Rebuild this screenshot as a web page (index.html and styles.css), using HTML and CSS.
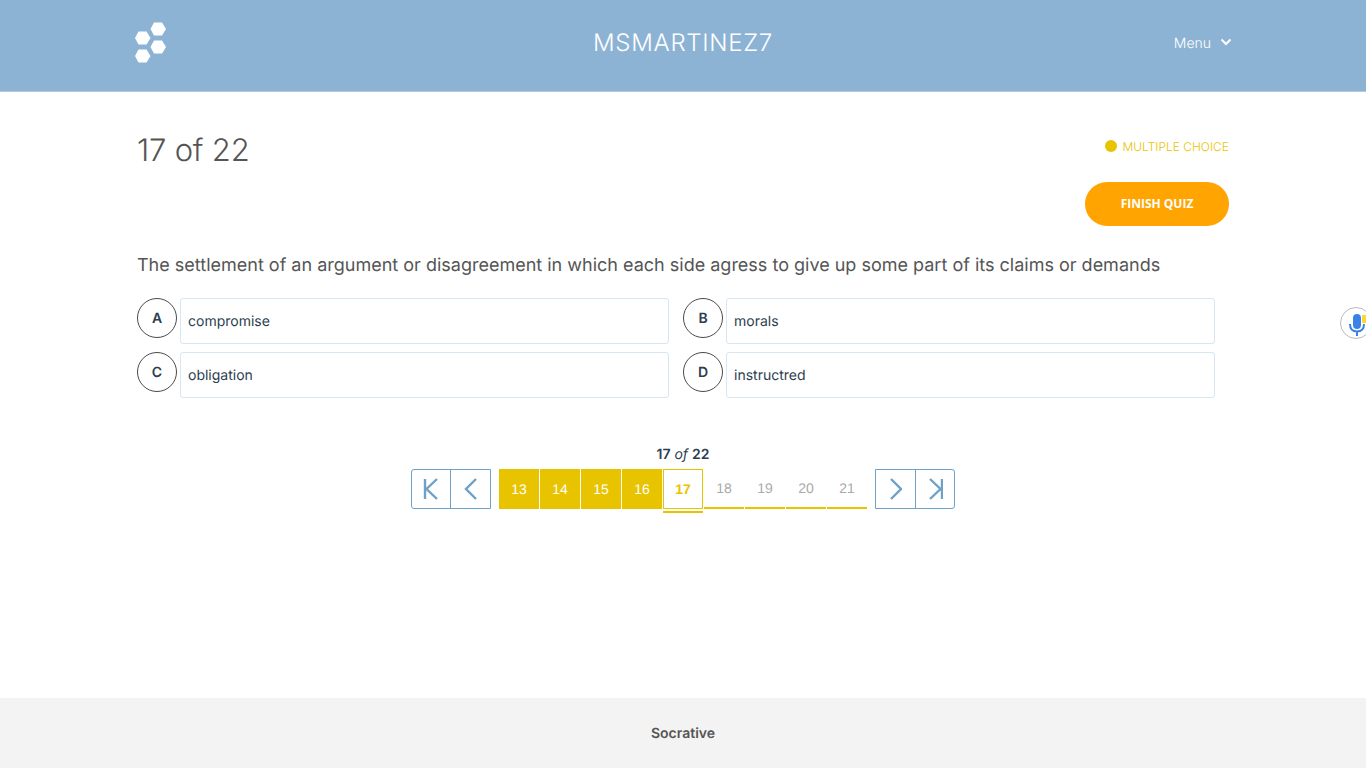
FILE: index.html
```html
<!DOCTYPE html>
<html lang="en">
  <head>
    <meta charset="UTF-8" />
    <meta name="viewport" content="width=device-width, initial-scale=1.0" />
    <title>Socrative</title>
    <link rel="stylesheet" href="styles.css">
  </head>
  <body>
    <header class="top-bar">
      <div class="top-inner">
        <svg class="logo" width="32" height="42" viewBox="0 0 32 42">
          <polygon points="15.500,7 19,0.500 27,0.500 31,7 27,13.500 19,13.500" />
          <polygon points="0,16 3.500,9.500 11.500,9.500 15.500,16 11.500,22.500 3.500,22.500" />
          <polygon points="15.500,25 19,18.500 27,18.500 31,25 27,31.500 19,31.500" />
          <polygon points="0,34 3.500,27.500 11.500,27.500 15.500,34 11.500,40.500 3.500,40.500" />
        </svg>
        <div class="room-name">MSMARTINEZ7</div>
        <div class="menu">
          Menu
          <svg width="12" height="8" viewBox="0 0 12 8"><polyline points="1.500,1.500 6,6 10.500,1.500" /></svg>
        </div>
      </div>
    </header>

    <main class="contents">
      <div class="quiz-head">
        <h1 class="quiz-count">17 of 22</h1>
        <div class="quiz-side">
          <div class="quiz-type"><span class="dot"></span>MULTIPLE CHOICE</div>
          <button class="finish-btn">FINISH QUIZ</button>
        </div>
      </div>

      <p class="question">The settlement of an argument or disagreement in which each side agress to give up some part of its claims or demands</p>

      <div class="answers">
        <div class="answer"><span class="letter">A</span><div class="answer-text">compromise</div></div>
        <div class="answer"><span class="letter">B</span><div class="answer-text">morals</div></div>
        <div class="answer"><span class="letter">C</span><div class="answer-text">obligation</div></div>
        <div class="answer"><span class="letter">D</span><div class="answer-text">instructred</div></div>
      </div>

      <div class="pager">
        <div class="pager-label"><b>17</b> <i>of</i> <b>22</b></div>
        <div class="pager-row">
          <div class="arrows arrows-back">
            <button class="arrow">
              <svg width="16" height="22" viewBox="0 0 16 22"><path d="M2 1v20M14 1 3.500 11 14 21" /></svg>
            </button>
            <button class="arrow">
              <svg width="14" height="22" viewBox="0 0 14 22"><path d="M12 1 2 11l10 10" /></svg>
            </button>
          </div>
          <div class="pages">
            <span class="page done">13</span>
            <span class="page done">14</span>
            <span class="page done">15</span>
            <span class="page done">16</span>
            <span class="page current">17</span>
            <span class="page todo">18</span>
            <span class="page todo">19</span>
            <span class="page todo">20</span>
            <span class="page todo">21</span>
          </div>
          <div class="arrows arrows-next">
            <button class="arrow">
              <svg width="14" height="22" viewBox="0 0 14 22"><path d="M3 1l10 10L3 21" /></svg>
            </button>
            <button class="arrow">
              <svg width="16" height="22" viewBox="0 0 16 22"><path d="M15 1v20M3 1l10.500 10L3 21" /></svg>
            </button>
          </div>
        </div>
      </div>
    </main>

    <footer class="footer">Socrative</footer>

    <div class="mic-badge">
      <svg width="32" height="32" viewBox="0 0 32 32">
        <rect x="22" y="8" width="8" height="8" fill="#fdd835" />
        <rect x="13" y="7" width="8" height="15" rx="4" fill="#3b82e8" />
        <path d="M10 17c0 5 3 7.500 7 7.500s7-2.500 7-7.500M17 24v5" fill="none" stroke="#3b82e8" stroke-width="2" />
      </svg>
    </div>
  </body>
</html>
```

FILE: styles.css
```css
* {
  box-sizing: border-box;
}

body {
  margin: 0;
  min-height: 100vh;
  display: flex;
  flex-direction: column;
  font-family: "Inter", "Liberation Sans", sans-serif;
  text-rendering: geometricPrecision;
  color: #555;
  background: #fff;
  overflow-x: hidden;
}

.top-bar {
  height: 92px;
  background: #8db3d4;
  border-bottom: 1px solid #b4c9dc;
  color: #fff;
}

.top-inner {
  width: 1096px;
  height: 91px;
  margin: 0 auto;
  display: grid;
  grid-template-columns: 1fr auto 1fr;
  align-items: center;
}

.logo {
  fill: #fff;
  margin-top: -5px;
}

.room-name {
  font-size: 24px;
  letter-spacing: 0.7px;
  font-weight: 300;
  margin-top: -7px;
}

.menu {
  justify-self: end;
  font-size: 14px;
  font-weight: 300;
  display: flex;
  align-items: center;
  gap: 9px;
  margin-top: -5px;
  margin-right: -1px;
}

.menu svg {
  fill: none;
  stroke: #fff;
  stroke-width: 2;
  margin-top: -3px;
}

.contents {
  width: 1092px;
  margin: 0 auto;
  flex: 1;
}

.quiz-head {
  display: flex;
  justify-content: space-between;
  align-items: flex-start;
}

.quiz-count {
  margin: 40px 0 0;
  font-size: 31px;
  letter-spacing: -0.2px;
  line-height: 38px;
  font-weight: 300;
}

.quiz-side {
  display: flex;
  flex-direction: column;
  align-items: flex-end;
  padding-top: 47px;
}

.quiz-type {
  display: flex;
  align-items: center;
  gap: 5px;
  font-size: 12px;
  line-height: 14px;
  color: #e8c400;
  font-weight: 350;
  padding-top: 1px;
  height: 14px;
}

.dot {
  width: 12px;
  height: 12px;
  border-radius: 50%;
  background: #e8c400;
  margin-top: -1px;
}

.finish-btn {
  width: 144px;
  height: 44px;
  margin-top: 29px;
  padding: 0 0 2px;
  border: 0;
  border-radius: 22px;
  background: #ffa400;
  color: #fff;
  font-family: "Open Sans", sans-serif;
  font-size: 12px;
  font-weight: 700;
}

.question {
  margin: 29px 0 0;
  font-size: 18px;
  line-height: 22px;
  font-weight: 400;
}

.answers {
  display: grid;
  grid-template-columns: 532px 532px;
  column-gap: 14px;
  row-gap: 8px;
  margin-top: 21px;
}

.answer {
  display: flex;
  align-items: flex-start;
  gap: 3px;
}

.letter {
  width: 40px;
  height: 40px;
  flex-shrink: 0;
  border: 1px solid #4a4a4a;
  border-radius: 50%;
  display: flex;
  align-items: center;
  justify-content: center;
  font-size: 14px;
  font-weight: 600;
  color: #2c3e50;
}

.answer-text {
  flex: 1;
  height: 46px;
  padding: 1px 7px 0;
  border: 1px solid #d6e6f2;
  border-radius: 3px;
  font-size: 14px;
  line-height: 44px;
  color: #2c3e50;
}

.pager {
  margin-top: 48px;
  display: flex;
  flex-direction: column;
  align-items: center;
}

.pager-label {
  font-size: 14px;
  line-height: 17px;
  color: #2c3e50;
}

.pager-label b {
  font-weight: 600;
}

.pager-row {
  display: flex;
  margin-top: 6px;
}

.arrows {
  display: flex;
  width: 80px;
  height: 40px;
  border: 1px solid #6fa0c6;
}

.arrows-back {
  border-radius: 3px 0 0 3px;
}

.arrows-next {
  border-radius: 0 3px 3px 0;
}

.arrow {
  flex: 1;
  padding: 0;
  border: 0;
  background: transparent;
  display: flex;
  align-items: center;
  justify-content: center;
}

.arrows-back .arrow:first-child {
  flex: 0 0 38px;
}

.arrow + .arrow {
  border-left: 1px solid #6fa0c6;
}

.arrow svg {
  fill: none;
  stroke: #6fa0c6;
  stroke-width: 2.4;
}

.pages {
  display: flex;
  gap: 1px;
  margin: 0 8px;
}

.page {
  width: 40px;
  height: 40px;
  display: flex;
  align-items: center;
  justify-content: center;
  font-family: "Liberation Sans", sans-serif;
  font-size: 14px;
}

.done {
  background: #e8c400;
  color: #fff;
}

.current {
  border: 1px solid #e8c400;
  color: #e8c400;
  font-weight: 700;
  position: relative;
}

.current::after {
  content: "";
  position: absolute;
  left: -1px;
  right: -1px;
  bottom: -5px;
  height: 2px;
  background: #e8c400;
}

.todo {
  color: #aaa;
  border-bottom: 2px solid #e8c400;
}

.footer {
  height: 70px;
  background: #f3f3f3;
  display: flex;
  align-items: center;
  justify-content: center;
  font-size: 14px;
  font-weight: 600;
}

.mic-badge {
  position: fixed;
  left: 1340px;
  top: 307px;
  width: 32px;
  height: 32px;
  border: 1px solid #bbb;
  border-radius: 50%;
  background: #fff;
  overflow: hidden;
}

.mic-badge svg {
  display: block;
  margin: -1px;
}
```
